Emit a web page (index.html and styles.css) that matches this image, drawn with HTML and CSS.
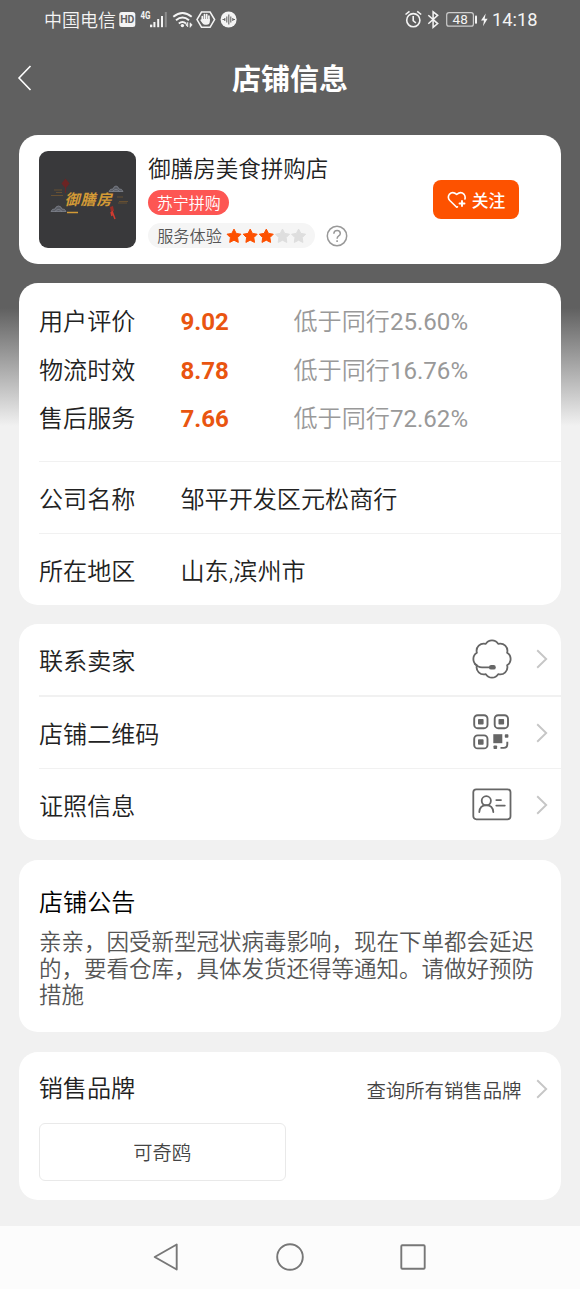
FILE: index.html
```html
<!DOCTYPE html>
<html lang="zh-CN">
<head>
<meta charset="utf-8">
<title>店铺信息</title>
<link rel="stylesheet" href="styles.css">
</head>
<body>
<div class="screen">
  <div class="status">
    <span class="carrier">中国电信</span>
    <svg class="status-icons" width="120" height="20" viewBox="118 10 120 20">
      <rect x="119.3" y="12" width="16" height="15" rx="2.5" fill="#f4f4f4"/>
      <text x="127.3" y="23.3" class="hd" text-anchor="middle">HD</text>
      <text x="140.500" y="18.500" class="net" textLength="10" lengthAdjust="spacingAndGlyphs">4G</text>
      <g fill="#f4f4f4"><rect x="150" y="24.6" width="2.3" height="2.6"/><rect x="153.4" y="22" width="2" height="5.2"/><rect x="157.2" y="19" width="2" height="8.2"/><rect x="161" y="16" width="2" height="11.2"/></g>
      <rect x="164.8" y="12" width="2" height="15.2" fill="#8c8c8c"/>
      <g fill="none" stroke="#f4f4f4" stroke-width="1.9"><path d="M173.300 16.800q9.200-7.600 18.400 0M176 20.300q6.500-5.400 13 0M178.800 23.400q3.700-2.900 7.200 0"/></g>
      <circle cx="182.400" cy="25.600" r="1.700" fill="#f4f4f4"/>
      <path d="M187.800 22.300v4.600l-2-2zM190 27.400v-4.600l2.200 2z" fill="#f4f4f4" stroke="#f4f4f4" stroke-width=".6"/>
      <path d="M201.500 12h8.600l4.500 7.600-4.500 7.600h-8.600l-4.500-7.600z" fill="none" stroke="#f4f4f4" stroke-width="1.500"/>
      <path d="M202.300 20.800v-4.300M204.500 20v-5.500M206.700 20v-5.500M208.900 20.500v-4.300" stroke="#f4f4f4" stroke-width="1.700" stroke-linecap="round"/>
      <path d="M201.500 19h8.300v2.500q0 3.300-3.300 3.300h-1.700q-1.600 0-2.600-1.700l-2-3.200q.5-.8 1.300-.2z" fill="#f4f4f4"/>
      <circle cx="228.600" cy="19.500" r="8" fill="#f4f4f4"/>
      <path d="M222.500 19.500h2M224.800 18v3M226.800 16.500v6M228.800 14.500v10M230.800 16.500v6M232.800 18v3M233 19.500h2" stroke="#666" stroke-width="1.100"/>
    </svg>
    <svg class="status-icons status-end" width="86" height="20" viewBox="404 10 86 20">
      <g fill="none" stroke="#f4f4f4" stroke-width="1.600"><circle cx="413.300" cy="20.200" r="6.600"/><path d="M413.200 16v4.600l2.700 2.400M405.500 14.500l4-3.200M421.200 14.500l-4-3.200"/></g>
      <path d="M428.300 15.300l9.400 8.300-4.600 3.800V11.800l4.600 3.600-9.400 8.300" fill="none" stroke="#f4f4f4" stroke-width="1.500"/>
      <rect x="446.700" y="12.600" width="26.700" height="13.600" rx="2.300" fill="none" stroke="#ccc" stroke-width="1.200"/>
      <text x="460.200" y="24.300" class="batt" text-anchor="middle">48</text>
      <rect x="475" y="15.500" width="2" height="8.200" rx=".8" fill="#f4f4f4"/>
      <path d="M485.700 13.500l-4.700 7h3l-1 5.700 4.600-7.400h-2.900z" fill="#f4f4f4"/>
    </svg>
    <span class="clock">14:18</span>
  </div>

  <header class="titlebar">
    <svg class="back" width="16" height="28" viewBox="0 0 16 28"><path d="M13.500 2L2 14l11.500 12" fill="none" stroke="#fff" stroke-width="1.600"/></svg>
    <h1 class="title">店铺信息</h1>
  </header>

  <main class="cards">
    <section class="card shop">
      <div class="logo">
        <svg width="97" height="97" viewBox="0 0 97 97">
          <path d="M26.500 27.500l4 5-4 5-4-5z" fill="#6b2424"/><path d="M26.500 36v6" stroke="#6b2424"/>
          <path d="M15 39h8M12 44.500h12M17 41.500h6M78 46h6M80 50.500h9M79 52h9" stroke="#675032" stroke-width="1"/>
          <g fill="#5a5d65" stroke="#888c96" stroke-width=".7"><path d="M70 40.500q1-3 4-2.500 1-3 3-3t3 3q3-.5 4 2.500zM73.500 40.500q3.500-4 7 0M12 60.500q1-3 4-2.500 1-3 3.500-3t3.500 3q3-.5 4 2.500zM16 60.500q3.500-4 7 0"/></g>
          <path d="M28 61.500h11" stroke="#d39a36" stroke-width="1.300"/>
          <path d="M71 56l3-1 1 5-3 1z" fill="#9c2d27"/><path d="M73 60l3 8M72 61l1 4" stroke="#cf3b30" stroke-width="1.500"/>
          <text x="25.500" y="53.500" class="logo-text" textLength="47">御膳房</text>
        </svg>
      </div>
      <div class="shop-info">
        <div class="shop-name">御膳房美食拼购店</div>
        <span class="tag">苏宁拼购</span>
        <div class="score-row">
          <div class="score">
            <span>服务体验</span>
            <svg width="81" height="16" viewBox="0 0 81 16">
              <defs><path id="star" d="M8 1.100l2.200 4.300 4.800.8-3.400 3.400.7 4.800L8 12.200l-4.300 2.200.7-4.800L1 6.200l4.800-.8z" stroke-linejoin="round"/></defs>
              <g fill="#fd5000" stroke="#fd5000"><use href="#star"/><use href="#star" x="16.200"/><use href="#star" x="32.300"/></g>
              <g fill="#dedede" stroke="#dedede"><use href="#star" x="48.500"/><use href="#star" x="64.600"/></g>
            </svg>
          </div>
          <svg width="22" height="22" viewBox="0 0 22 22" fill="none" stroke="#999"><circle cx="11" cy="11" r="9.700" stroke-width="1.500"/><path d="M7.800 8.700Q8 5.500 11.100 5.500T14.300 8.400Q14.300 9.900 12.700 10.900T11.100 13.800" stroke-width="1.500"/><path d="M11.100 15.300v1.700" stroke-width="1.600"/></svg>
        </div>
      </div>
      <button class="follow">
        <svg width="20" height="18" viewBox="0 0 20 18" fill="none" stroke="#fff" stroke-width="1.600" stroke-linecap="round" stroke-linejoin="round"><path d="M10.500 15.800L9.700 16.300 2.800 9.500Q.2 6.500 2.300 3.400 5.600-.2 9.700 3.400 13.800-.2 17.100 3.400 18.700 5.600 17.900 8"/><path d="M15 10v5M12.500 12.500h5" stroke-width="1.900"/></svg>
        <span>关注</span>
      </button>
    </section>

    <section class="card details">
      <div class="ratings">
        <div class="rating"><span class="label">用户评价</span><b class="value">9.02</b><span class="compare">低于同行<span class="percent">25.60%</span></span></div>
        <div class="rating"><span class="label">物流时效</span><b class="value">8.78</b><span class="compare">低于同行<span class="percent">16.76%</span></span></div>
        <div class="rating"><span class="label">售后服务</span><b class="value">7.66</b><span class="compare">低于同行<span class="percent">72.62%</span></span></div>
      </div>
      <div class="field"><span class="label">公司名称</span><span>邹平开发区元松商行</span></div>
      <div class="field"><span class="label">所在地区</span><span>山东,滨州市</span></div>
    </section>

    <section class="card links">
      <div class="link">
        <span class="link-name">联系卖家</span>
        <svg class="icon" width="40" height="40" viewBox="0 0 40 40" fill="none" stroke="#666" stroke-width="1.800" stroke-linejoin="round"><path d="M35.100 13.800a7.200 7.200 0 0 1 0 12.400a7.200 7.200 0 0 1-8.900 8.900a7.200 7.200 0 0 1-12.400 0a7.200 7.200 0 0 1-8.900-8.900a7.200 7.200 0 0 1 0-12.400a7.200 7.200 0 0 1 8.900-8.900a7.200 7.200 0 0 1 12.400 0a7.200 7.200 0 0 1 8.900 8.900z"/><path d="M2.500 24.500Q5.500 28.300 10 28.300h9"/><rect x="17" y="26" width="6.800" height="4.600" rx="2.200" fill="#666" stroke="none"/></svg>
        <svg class="chevron" width="12" height="20" viewBox="0 0 12 20"><path d="M1.200 1.200l9 8.800-9 8.800"/></svg>
      </div>
      <div class="link">
        <span class="link-name">店铺二维码</span>
        <svg class="icon" width="40" height="40" viewBox="0 0 40 40" fill="none" stroke="#666" stroke-width="1.900"><rect x="2.200" y="2.200" width="13.300" height="13" rx="3.500"/><rect x="22.700" y="2.200" width="13.300" height="13" rx="3.500"/><rect x="2.200" y="22.400" width="13.300" height="13" rx="3.500"/><path d="M35.300 28.700v2.600q0 3.600-3.600 3.600h-3.200"/><g fill="#666" stroke="none"><rect x="6" y="6" width="5.600" height="5.600" rx=".8"/><rect x="26.500" y="6" width="5.600" height="5.600" rx=".8"/><rect x="6" y="26.200" width="5.600" height="5.600" rx=".8"/><rect x="21.300" y="21.200" width="9" height="9"/><rect x="32.800" y="21.200" width="3.600" height="3.600" rx=".8"/><rect x="21.500" y="32.400" width="3.600" height="3.600" rx=".8"/></g></svg>
        <svg class="chevron" width="12" height="20" viewBox="0 0 12 20"><path d="M1.200 1.200l9 8.800-9 8.800"/></svg>
      </div>
      <div class="link">
        <span class="link-name">证照信息</span>
        <svg class="icon" width="40" height="40" viewBox="0 0 40 40" fill="none" stroke="#666" stroke-width="1.800" stroke-linecap="round"><rect x="1.300" y="4.300" width="37.200" height="30" rx="3"/><circle cx="14.300" cy="15.800" r="4.600"/><path d="M7.300 27Q7.800 20.100 14.300 20.100T21.300 27M24.300 15.100h4.700M24.300 20.600h8.500"/></svg>
        <svg class="chevron" width="12" height="20" viewBox="0 0 12 20"><path d="M1.200 1.200l9 8.800-9 8.800"/></svg>
      </div>
    </section>

    <section class="card notice">
      <h2 class="heading">店铺公告</h2>
      <p class="notice-text">亲亲，因受新型冠状病毒影响，现在下单都会延迟<br>的，要看仓库，具体发货还得等通知。请做好预防<br>措施</p>
    </section>

    <section class="card brands">
      <div class="brand-head">
        <h2 class="heading">销售品牌</h2>
        <span class="all-brands">查询所有销售品牌</span>
        <svg class="chevron" width="12" height="20" viewBox="0 0 12 20"><path d="M1.200 1.200l9 8.800-9 8.800"/></svg>
      </div>
      <div class="brand">可奇鸥</div>
    </section>
  </main>

  <nav class="navbar">
    <svg width="28" height="30" viewBox="0 0 28 30"><path d="M23.700 2.500v25L1.700 15z"/></svg>
    <svg width="28" height="30" viewBox="0 0 28 30"><circle cx="14" cy="15" r="12.800"/></svg>
    <svg width="28" height="30" viewBox="0 0 28 30"><rect x="2.300" y="3.300" width="23.400" height="23.400" rx="1"/></svg>
  </nav>
</div>
</body>
</html>
```
FILE: styles.css
```css
* { box-sizing: border-box; }

body {
  margin: 0;
  font-family: Roboto, "Noto Sans CJK SC", sans-serif;
  font-weight: 350;
  color: #222;
}

svg { display: block; flex: none; }

.screen {
  display: flex;
  flex-direction: column;
  width: 580px;
  height: 1289px;
  background: linear-gradient(#606060 308px, #f1f1f1 426px);
}

.status {
  display: flex;
  align-items: center;
  height: 40px;
  padding: 0 43px 0 44px;
  color: #f4f4f4;
  font-weight: 400;
  line-height: 40px;
}

.carrier { width: 74px; padding-top: 2px; font-size: 18px; font-weight: 350; white-space: nowrap; }
.status-end { margin-left: auto; }
.clock { width: 47px; padding-left: 2px; font-size: 18.300px; white-space: nowrap; }
.hd { font: 700 10.500px Roboto, sans-serif; fill: #606060; }
.net { font: 700 10px Roboto, sans-serif; fill: #f4f4f4; }
.batt { font: 400 13.500px Roboto, sans-serif; fill: #f4f4f4; }

.titlebar {
  display: grid;
  grid-template-columns: 40px 1fr 40px;
  align-items: center;
  height: 76px;
  color: #fff;
}

.back { margin-left: 17px; }
.title { margin: 0; padding-top: 4px; font-size: 29px; line-height: 72px; font-weight: 700; text-align: center; }

.cards {
  display: flex;
  flex-direction: column;
  gap: 19.500px;
  padding: 19.300px 19.500px 0 19.200px;
}

.card { border-radius: 19px; background: #fff; }

.shop {
  display: flex;
  align-items: center;
  height: 128.500px;
  padding: 0 41.500px 0 19.500px;
}

.logo { width: 97px; height: 97px; border-radius: 9px; background: #39393b; overflow: hidden; }
.logo-text { font: italic 700 15px "Noto Sans CJK SC", sans-serif; fill: #d39a36; }
.shop-info { flex: 1; height: 97px; padding-left: 12.500px; }
.shop-name { padding-top: 2px; font-size: 22.500px; line-height: 32px; }

.tag {
  display: block;
  width: 81px;
  height: 25px;
  margin-top: 4.900px;
  border-radius: 13px;
  background: #fd5653;
  color: #fff;
  font-size: 16px;
  line-height: 27px;
  text-align: center;
}

.score-row { display: flex; align-items: center; gap: 11px; margin-top: 8.500px; }

.score {
  display: flex;
  align-items: center;
  width: 167px;
  height: 25px;
  padding-left: 9px;
  gap: 4px;
  border-radius: 13px;
  background: #f5f5f5;
  color: #555;
  font-size: 16.200px;
  line-height: 25px;
  white-space: nowrap;
}

.score span { padding-top: 2px; }

.follow {
  display: flex;
  align-items: center;
  justify-content: center;
  gap: 5px;
  width: 86px;
  height: 39px;
  padding: 0;
  border: 0;
  border-radius: 8px;
  background: #fd5200;
  color: #fff;
  font: 500 16.800px/39px Roboto, "Noto Sans CJK SC", sans-serif;
}

.follow span { padding-top: 3px; }

.details { height: 321.300px; padding: 14.800px 0 0 19.800px; font-size: 24.100px; }
.ratings { height: 162.900px; }
.rating, .field { display: grid; grid-template-columns: 141.500px 113px 1fr; align-items: center; }
.rating { height: 48.300px; line-height: 48px; }
.value { color: #e95510; font-weight: 700; }
.compare { color: #999; white-space: nowrap; }
.percent { font-weight: 400; }
.field { grid-template-columns: 141.500px 1fr; height: 72px; border-top: 1.500px solid #f1f1f1; }

.links { height: 216.300px; padding-left: 19.800px; font-size: 24.100px; }
.link { display: flex; align-items: center; height: 72px; padding-right: 13px; border-top: 1px solid #f1f1f1; }
.link:first-child { height: 70.700px; border-top: 0; }
.link:nth-child(2) { height: 73.500px; border-top-width: 2px; }
.link-name { flex: 1; }
.icon { margin-right: 24px; }
.chevron { fill: none; stroke: #c6c6c6; stroke-width: 1.900; }

.notice { height: 172.500px; padding: 25px 0 0 19.800px; }
.heading { margin: 0; font-size: 24.100px; font-weight: 350; line-height: 36px; }
.notice .heading { color: #000; }
.notice-text { margin: 8.600px 0 0; color: #555; font-size: 22.500px; line-height: 26.300px; white-space: nowrap; }

.brands { height: 148px; padding: 18.500px 13px 0 19.500px; }
.brand-head { display: flex; align-items: center; }
.brand-head .heading { flex: 1; padding-top: 1px; }
.all-brands { margin-right: 14px; padding-top: 1px; color: #444; font-size: 19.400px; }

.brand {
  width: 247px;
  height: 58px;
  margin-top: 15.500px;
  border: 1.500px solid #e9e9e9;
  border-radius: 6px;
  color: #444;
  font-size: 19.300px;
  line-height: 59px;
  text-align: center;
}

.navbar {
  display: flex;
  align-items: center;
  justify-content: center;
  gap: 95px;
  height: 63.500px;
  margin-top: auto;
  background: #fcfcfc;
}

.navbar svg { fill: none; stroke: #777; stroke-width: 1.900; stroke-linejoin: round; }
```
